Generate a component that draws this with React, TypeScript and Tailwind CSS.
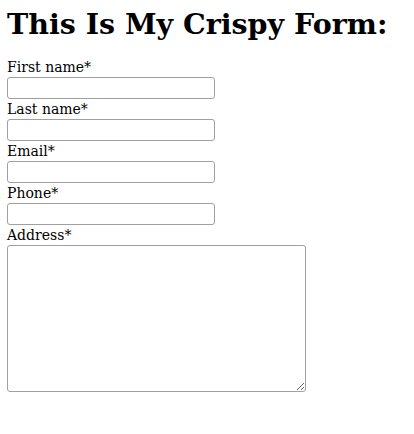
import React from 'react';

const fields = ['First name', 'Last name', 'Email', 'Phone'];

export default function App() {
  return (
    <div className="px-[7px] pt-[3px] font-['DejaVu_Serif',serif] text-black bg-white min-h-screen">
      <h1 className="text-[28.5px] font-bold leading-normal mb-[12px]">This Is My Crispy Form:</h1>
      <form className="flex flex-col">
        {fields.map((f) => (
          <div key={f} className="flex flex-col items-start h-[42px]">
            <label className="text-[14px] leading-[19px]">{f}*</label>
            <input
              type="text"
              className="w-[208px] h-[22px] border border-[#a0a0a0] rounded-[3px] px-1 text-[13px] font-['DejaVu_Sans',sans-serif]"
            />
          </div>
        ))}
        <div className="flex flex-col items-start">
          <label className="text-[14px] leading-[19px]">Address*</label>
          <textarea className="w-[299px] h-[147px] border border-[#a0a0a0] rounded-[3px] p-1 text-[13px] font-['DejaVu_Sans_Mono',monospace]" />
        </div>
      </form>
    </div>
  );
}
